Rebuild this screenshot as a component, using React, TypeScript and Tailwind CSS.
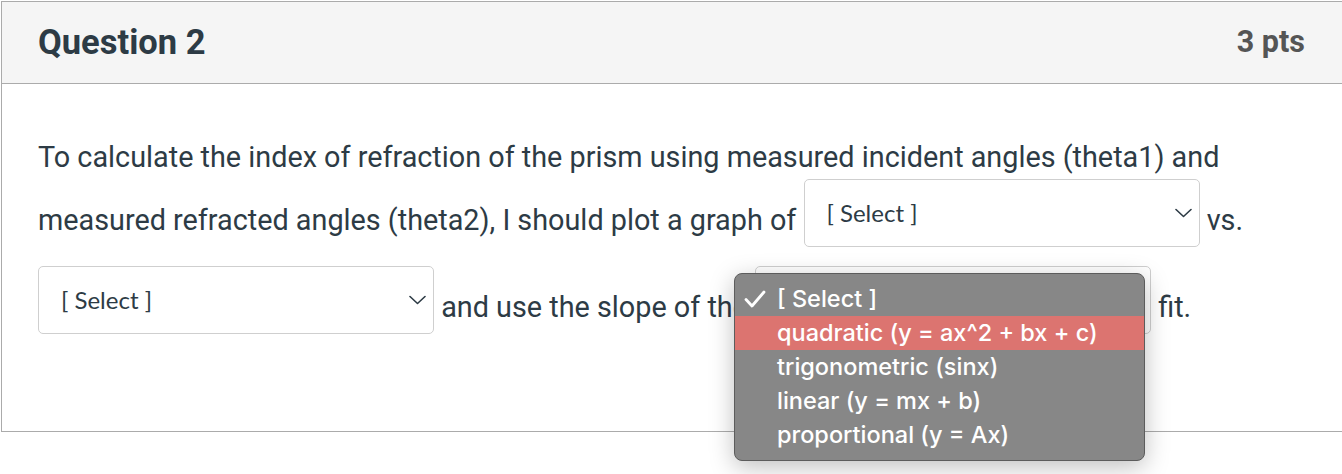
import React from "react";

const options = [
  "quadratic (y = ax^2 + bx + c)",
  "trigonometric (sinx)",
  "linear (y = mx + b)",
  "proportional (y = Ax)",
];

function Chevron() {
  return (
    <svg width="17" height="10" viewBox="0 0 17 10" fill="none" className="shrink-0">
      <path d="M1 1.5 L8.5 8.5 L16 1.5" stroke="#2d3b45" strokeWidth="1.6" strokeLinecap="round" strokeLinejoin="round" />
    </svg>
  );
}

function Check() {
  return (
    <svg width="22" height="18" viewBox="0 0 22 18" fill="none">
      <path d="M2 9.5 L8 16 L20 2" stroke="white" strokeWidth="2.8" strokeLinecap="round" strokeLinejoin="round" />
    </svg>
  );
}

function Select({ open = false }: { open?: boolean }) {
  return (
    <span className="inline-flex align-middle mb-[19px] h-[68px] w-[396px] items-center justify-between rounded-[5px] border border-[#cfcfcf] bg-white pl-[22px] pr-[7px] font-['Lato',sans-serif] text-[24px] leading-none text-[#2d3b45]">
      <span className={open ? "invisible" : ""}>[ Select ]</span>
      <Chevron />
    </span>
  );
}

export default function App() {
  return (
    <div className="relative h-[474px] w-full overflow-hidden bg-white font-['Roboto',sans-serif] text-[#2d3b45]">
      <section className="ml-px mt-px w-[1346px] border border-[#ababab]">
        <header className="flex h-[82px] items-center justify-between border-b border-[#ababab] bg-[#f5f5f5] pl-[36px] pr-[41px]">
          <h2 className="text-[34.5px] font-bold leading-none">Question 2</h2>
          <span className="text-[30.5px] font-bold leading-none text-[#555555]">3 pts</span>
        </header>

        <div className="pl-[36px] pr-[40px] pt-[51px] pb-[78px]">
          <p className="text-[28.8px] leading-[44px]">
            To calculate the index of refraction of the prism using measured incident angles (theta1) and
            measured refracted angles (theta2), I should plot a graph of <Select /> vs.{" "}
            <Select /> and use the slope of the <Select open /> fit.
          </p>
        </div>
      </section>

      {/* native popup menu, opened over the third select */}
      <div className="absolute left-[734px] top-[273px] w-[411px] rounded-[8px] border border-[#5c5c5c] bg-[#878787] py-[8px] font-['Inter',sans-serif] text-[23.5px] font-medium leading-none text-white shadow-[0_6px_24px_rgba(0,0,0,0.25)]">
        <div className="flex h-[34px] items-center">
          <span className="flex w-[42px] justify-center pr-[2px]">
            <Check />
          </span>
          <span>[ Select ]</span>
        </div>
        {options.map((o, i) => (
          <div
            key={o}
            className={`flex h-[34px] items-center pl-[42px] ${i === 0 ? "bg-[#dc7470]" : ""}`}
          >
            {o}
          </div>
        ))}
      </div>
    </div>
  );
}
